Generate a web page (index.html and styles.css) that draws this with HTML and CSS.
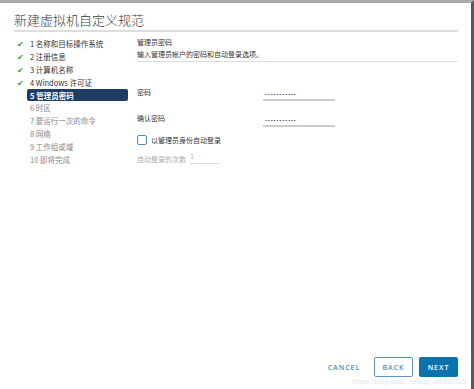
FILE: index.html
```html
<!DOCTYPE html>
<html>
<head>
<meta charset="UTF-8">
<title>新建虚拟机自定义规范</title>
<link rel="stylesheet" href="styles.css">
</head>
<body>
<div class="dialog">
  <div class="title">新建虚拟机自定义规范</div>
  <div class="main">
    <ul class="steps">
      <li class="done"><span class="chk">&#10004;</span>1 名称和目标操作系统</li>
      <li class="done"><span class="chk">&#10004;</span>2 注册信息</li>
      <li class="done"><span class="chk">&#10004;</span>3 计算机名称</li>
      <li class="done"><span class="chk">&#10004;</span>4 Windows 许可证</li>
      <li class="active">5 管理员密码</li>
      <li class="todo"><span class="chk"></span>6 时区</li>
      <li class="todo"><span class="chk"></span>7 要运行一次的命令</li>
      <li class="todo"><span class="chk"></span>8 网络</li>
      <li class="todo"><span class="chk"></span>9 工作组或域</li>
      <li class="todo"><span class="chk"></span>10 即将完成</li>
    </ul>
    <div class="content">
      <div class="head">
        <div class="head-title">管理员密码</div>
        <div class="head-desc">输入管理员帐户的密码和自动登录选项。</div>
      </div>
      <div class="row first">
        <span class="label">密码</span>
        <span class="field">•••••••••••</span>
      </div>
      <div class="row">
        <span class="label">确认密码</span>
        <span class="field">•••••••••••</span>
      </div>
      <label class="check"><span class="box"></span>以管理员身份自动登录</label>
      <div class="count">
        <span>自动登录的次数</span>
        <span class="count-field">1</span>
      </div>
    </div>
  </div>
  <div class="footer">
    <button class="btn link">CANCEL</button>
    <button class="btn outline">BACK</button>
    <button class="btn primary">NEXT</button>
  </div>
  <div class="mark">https://blog.csdn.net/qq_45332321</div>
</div>
</body>
</html>
```
FILE: styles.css
```css
body {
  margin: 0;
  font-family: "Noto Sans CJK SC", "Noto Sans", sans-serif;
  color: #333;
  background: #fff;
}

.dialog {
  position: relative;
  box-sizing: border-box;
  width: 474px;
  height: 389px;
  border-top: 3px solid #aaa;
  border-right: 3px solid #5a5a5a;
  display: flex;
  flex-direction: column;
}

.title {
  margin: 0 13px 0 14px;
  padding-top: 7px;
  height: 20px;
  font-size: 13px;
  font-weight: 300;
  line-height: 19px;
  color: #3a3a3a;
  border-bottom: 2px solid #ddd;
}

.main {
  display: flex;
  flex: 1;
}

.steps {
  list-style: none;
  margin: 0;
  padding: 5px 0 0 0;
  width: 137px;
}

.steps li {
  display: flex;
  align-items: center;
  height: 13px;
  font-size: 7.5px;
  color: #333;
}

.steps .chk {
  width: 13px;
  margin-left: 17px;
  color: #3d9a3d;
  font-size: 8px;
}

.steps .active {
  margin: 0 0 0 27px;
  padding-left: 3px;
  width: 98px;
  height: 12px;
  border-radius: 2px;
  background: #1f3d63;
  color: #fff;
  font-weight: bold;
}

.steps .todo {
  color: #888;
}

.content {
  flex: 1;
  padding-top: 4px;
  padding-right: 13px;
  font-size: 7px;
}

.head {
  border-bottom: 1px solid #ddd;
  padding-bottom: 1px;
}

.head-title {
  line-height: 12px;
}

.head-desc {
  line-height: 12px;
}

.row {
  display: flex;
  align-items: flex-end;
  height: 26px;
}

.row.first {
  margin-top: 13px;
}

.label {
  width: 126px;
  padding-bottom: 4px;
}

.field {
  width: 70px;
  border-bottom: 2px solid #ccc;
  padding-bottom: 2px;
  padding-left: 2px;
  font-family: "DejaVu Sans", sans-serif;
  font-size: 4px;
  letter-spacing: 0.5px;
  color: #333;
}

.check {
  display: flex;
  align-items: center;
  margin-top: 7px;
  height: 12px;
}

.box {
  box-sizing: border-box;
  width: 10px;
  height: 10px;
  margin-right: 4px;
  border: 1px solid #4a8bbf;
  border-radius: 2px;
}

.count {
  display: flex;
  align-items: flex-end;
  margin-top: 5px;
  color: #aaa;
}

.count-field {
  width: 30px;
  margin-left: 4px;
  padding-bottom: 2px;
  border-bottom: 1px solid #ddd;
}

.footer {
  display: flex;
  justify-content: flex-end;
  align-items: center;
  padding: 0 13px 12px 0;
  gap: 6px;
}

.btn {
  box-sizing: border-box;
  height: 20px;
  padding: 0;
  font-family: "Open Sans", "Noto Sans", sans-serif;
  font-size: 7px;
  font-weight: 600;
  letter-spacing: 1px;
  border-radius: 2px;
  background: none;
}

.btn.link {
  width: 40px;
  margin-right: 4px;
  border: none;
  color: #4f8bbd;
}

.btn.outline {
  width: 39px;
  border: 1px solid #5f93c0;
  color: #5a8ab8;
}

.btn.primary {
  width: 39px;
  border: none;
  background: #0a72ad;
  color: #fff;
}

.mark {
  position: absolute;
  right: 4px;
  bottom: 3px;
  font-family: "Liberation Sans", sans-serif;
  font-size: 7.5px;
  color: #e2e8ee;
}
```
